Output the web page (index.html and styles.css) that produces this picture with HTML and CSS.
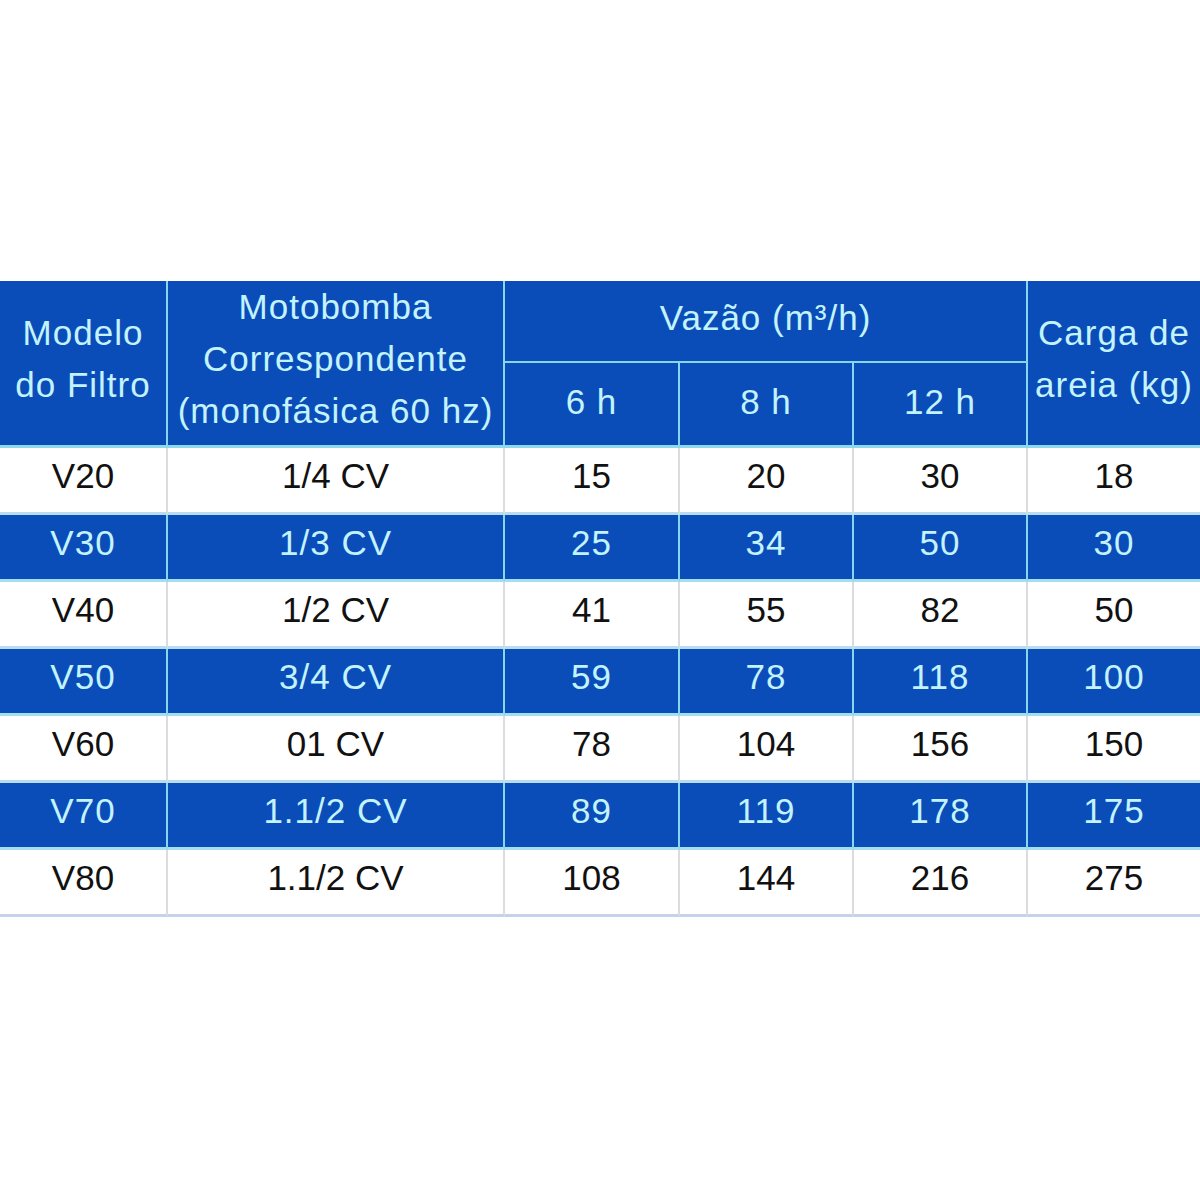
FILE: index.html
```html
<!DOCTYPE html>
<html lang="pt">
<head>
<meta charset="utf-8">
<link rel="stylesheet" href="styles.css">
</head>
<body>
<div class="page">
<table class="spec">
  <colgroup>
    <col class="c1"><col class="c2"><col class="c3"><col class="c4"><col class="c5"><col class="c6">
  </colgroup>
  <thead>
    <tr class="h1">
      <th rowspan="2" class="lines2">Modelo<br>do Filtro</th>
      <th rowspan="2" class="lines3">Motobomba<br>Correspondente<br>(monofásica 60 hz)</th>
      <th colspan="3">Vazão (m³/h)</th>
      <th rowspan="2" class="lines2 last">Carga de<br>areia (kg)</th>
    </tr>
    <tr class="h2">
      <th>6 h</th><th>8 h</th><th>12 h</th>
    </tr>
  </thead>
  <tbody>
    <tr class="w"><td>V20</td><td>1/4 CV</td><td>15</td><td>20</td><td>30</td><td class="last">18</td></tr>
    <tr class="b"><td>V30</td><td>1/3 CV</td><td>25</td><td>34</td><td>50</td><td class="last">30</td></tr>
    <tr class="w"><td>V40</td><td>1/2 CV</td><td>41</td><td>55</td><td>82</td><td class="last">50</td></tr>
    <tr class="b"><td>V50</td><td>3/4 CV</td><td>59</td><td>78</td><td>118</td><td class="last">100</td></tr>
    <tr class="w"><td>V60</td><td>01 CV</td><td>78</td><td>104</td><td>156</td><td class="last">150</td></tr>
    <tr class="b"><td>V70</td><td>1.1/2 CV</td><td>89</td><td>119</td><td>178</td><td class="last">175</td></tr>
    <tr class="w end"><td>V80</td><td>1.1/2 CV</td><td>108</td><td>144</td><td>216</td><td class="last">275</td></tr>
  </tbody>
</table>
</div>
</body>
</html>
```

FILE: styles.css
```css
html, body {
  margin: 0;
  padding: 0;
  background: #ffffff;
}

.page {
  width: 1200px;
  height: 1200px;
  padding-top: 281px;
  box-sizing: border-box;
  background: #ffffff;
}

.spec {
  width: 1200px;
  table-layout: fixed;
  border-collapse: separate;
  border-spacing: 0;
  font-family: "Liberation Sans", Arial, sans-serif;
  font-size: 35px;
}

.c1 { width: 168px; }
.c2 { width: 337px; }
.c3 { width: 175px; }
.c4 { width: 174px; }
.c5 { width: 174px; }
.c6 { width: 172px; }

.spec th,
.spec td {
  padding: 0;
  text-align: center;
  vertical-align: middle;
  box-sizing: border-box;
}

.spec th {
  background: #0b4db8;
  color: #c2f3ff;
  font-weight: normal;
  letter-spacing: 1px;
  line-height: 52px;
  border-right: 2px solid #86d6ee;
  border-bottom: 3px solid #8fd9ef;
}

.spec th.last,
.spec td.last {
  border-right: none;
}

.h1 th { height: 80px; }
.h1 th[colspan] { border-bottom: 2px solid #86d6ee; line-height: 72px; padding-bottom: 6px; }
.h2 th { height: 83px; line-height: 76px; padding-bottom: 4px; }
.lines2 { padding-bottom: 8px !important; }
.lines3 { line-height: 50px; padding-bottom: 8px !important; }

.spec td {
  height: 67px;
  line-height: 56px;
  padding-bottom: 8px;
}

.w td {
  background: #ffffff;
  color: #111111;
  border-right: 2px solid #dadde0;
  border-bottom: 3px solid #b9dcef;
}

.b td {
  background: #0b4db8;
  color: #c2f3ff;
  letter-spacing: 1px;
  border-right: 2px solid #86d6ee;
  border-bottom: 3px solid #a6def1;
}

.w.end td {
  border-bottom: 3px solid #c5d3ea;
}
```
